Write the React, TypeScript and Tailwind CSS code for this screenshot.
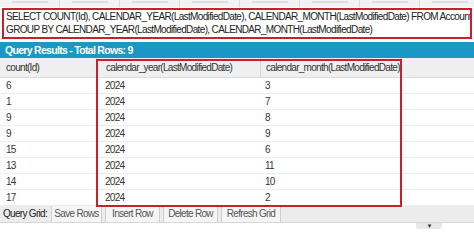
import React from 'react'

const rows = [
  ['6', '2024', '3'],
  ['1', '2024', '7'],
  ['9', '2024', '8'],
  ['9', '2024', '9'],
  ['15', '2024', '6'],
  ['13', '2024', '11'],
  ['14', '2024', '10'],
  ['17', '2024', '2'],
]

export default function App() {
  return (
    <div
      className="w-[474px] h-[229px] overflow-hidden bg-white text-[10px] tracking-[-0.7px] text-[#333] whitespace-nowrap"
      style={{ fontFamily: '"Liberation Sans", Arial, sans-serif' }}
    >
      {/* faded tab strip */}
      <div className="flex h-[7px] overflow-hidden bg-[#f3f3f3]">
        {[0, 1, 2, 3, 4, 5, 6, 7].map((t) => (
          <div key={t} className="w-[60px] shrink-0 border-r border-[#d9d9d9] flex items-start justify-center">
            <div className="mt-[1px] h-[2px] w-[36px] bg-[#dcdcdc]"></div>
          </div>
        ))}
      </div>

      {/* query text */}
      <div className="mx-[2px] mt-[1px] h-[31px] border-2 border-[#c9202b] px-[2px] pt-[1px] leading-[12.5px] text-[10px] tracking-[-0.64px] text-[#222] overflow-hidden">
        <div>SELECT COUNT(Id), CALENDAR_YEAR(LastModifiedDate), CALENDAR_MONTH(LastModifiedDate) FROM Account</div>
        <div>GROUP BY CALENDAR_YEAR(LastModifiedDate), CALENDAR_MONTH(LastModifiedDate)</div>
      </div>

      {/* results header */}
      <div className="mt-[3px] h-[16px] bg-[#1a97c4] px-[5px] text-[10.5px] tracking-[-0.7px] font-bold leading-[16px] text-white">
        Query Results - Total Rows: 9
      </div>

      {/* grid */}
      <div className="relative">
        <div className="flex h-[20px] bg-[#efefef] border-b border-[#dcdcdc] leading-[20px]">
          <div className="w-[97px] pl-[6px]">count(Id)</div>
          <div className="w-[163px] pl-[8px] border-l border-[#d4d4d4]">calendar_year(LastModifiedDate)</div>
          <div className="w-[140px] pl-[5px] border-l border-[#d4d4d4]">calendar_month(LastModifiedDate)</div>
          <div className="flex-1 border-l border-[#d4d4d4]"></div>
        </div>
        {rows.map((r, i) => (
          <div key={i} className="flex h-[16px] border-b border-[#ececec] leading-[15px]">
            <div className="w-[97px] pl-[6px]">{r[0]}</div>
            <div className="w-[163px] pl-[8px]">{r[1]}</div>
            <div className="w-[140px] pl-[5px]">{r[2]}</div>
            <div className="flex-1"></div>
          </div>
        ))}
        {/* highlight annotation */}
        <div className="absolute left-[96px] top-[1px] w-[306px] h-[148px] border-2 border-[#c9202b] pointer-events-none"></div>
      </div>

      {/* toolbar */}
      <div className="flex h-[17px] items-stretch bg-[#ececec] border-b border-[#d8d8d8] leading-[16px]">
        <div className="w-[48px] pl-[3px] text-[#222]">Query Grid:</div>
        {[
          ['Save Rows', 'w-[51px]'],
          ['Insert Row', 'w-[55px]'],
          ['Delete Row', 'w-[55px]'],
          ['Refresh Grid', 'w-[60px]'],
        ].map(([b, w]) => (
          <div key={b} className={`${w} ml-[3px] border-x border-[#cfcfcf] bg-[#f5f5f5] text-center text-[#555]`}>
            {b}
          </div>
        ))}
      </div>

      <div className="flex justify-end pr-[32px]">
        <div className="flex h-[6px] w-[26px] items-center justify-center rounded-b-[3px] bg-[#e8e8e8] text-[6px] leading-none text-[#333]">
          ▼
        </div>
      </div>
    </div>
  )
}
